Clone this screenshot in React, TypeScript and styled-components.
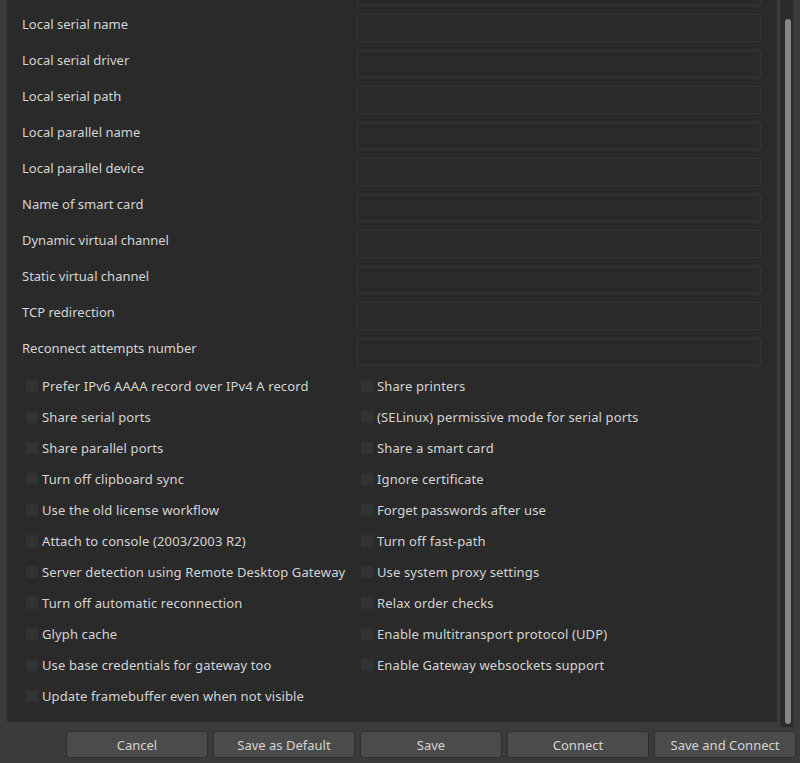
import React from "react";
import styled, { createGlobalStyle } from "styled-components";

const Global = createGlobalStyle`
  html, body { margin: 0; padding: 0; background: #3b3b3b; }
  body { font-family: "Noto Sans", "Open Sans", sans-serif; }
`;

const Window = styled.div`
  width: 800px;
  height: 763px;
  background: #3b3b3b;
  display: flex;
  flex-direction: column;
  overflow: hidden;
  font-family: "Noto Sans", "Open Sans", sans-serif;
  font-size: 13px;
  color: #d4d4d4;
`;

const Top = styled.div`
  display: flex;
  align-items: flex-start;
  height: 727px;
  padding-left: 7px;
`;

const Panel = styled.div`
  width: 770px;
  height: 722px;
  background: #2a2a2a;
  overflow: hidden;
  box-sizing: border-box;
  padding: 0 16px 0 15px;
`;

const FormGrid = styled.div`
  display: grid;
  grid-template-columns: 335px 1fr;
  grid-auto-rows: 28px;
  row-gap: 8px;
  margin-top: -22px;
`;

const Label = styled.div`
  line-height: 18px;
  padding-top: 1px;
  white-space: nowrap;
`;

const Field = styled.div`
  border: 1px solid #363636;
  border-radius: 3px;
  background: #2a2a2a;
`;

const CheckGrid = styled.div`
  display: grid;
  grid-template-columns: 335px 1fr;
  grid-auto-rows: 18px;
  row-gap: 13px;
  margin-top: 11px;
`;

const CheckItem = styled.div`
  display: flex;
  align-items: flex-end;
  line-height: 18px;
  padding-left: 4px;
  white-space: nowrap;
  letter-spacing: 0.12px;
`;

const Box = styled.span`
  width: 12px;
  height: 12px;
  background: #333333;
  border-radius: 1px;
  margin-right: 4px;
  margin-bottom: 3px;
  flex: none;
`;

const Track = styled.div`
  width: 13px;
  height: 727px;
  margin-left: 3px;
  background: #2b2b2b;
  box-sizing: border-box;
  padding: 19px 0 0 5px;
`;

const Thumb = styled.div`
  width: 6px;
  height: 705px;
  background: #868686;
  border-radius: 3px;
`;

const ButtonBar = styled.div`
  display: flex;
  gap: 5px;
  padding-left: 66px;
  margin-top: 4px;
`;

const Button = styled.div`
  width: 142px;
  height: 27px;
  box-sizing: border-box;
  background: #4b4b4b;
  border: 1px solid #2f2f2f;
  border-radius: 3px;
  display: flex;
  align-items: center;
  justify-content: center;
  color: #d4d4d4;
  font-size: 13px;
`;

const fields = [
  "",
  "Local serial name",
  "Local serial driver",
  "Local serial path",
  "Local parallel name",
  "Local parallel device",
  "Name of smart card",
  "Dynamic virtual channel",
  "Static virtual channel",
  "TCP redirection",
  "Reconnect attempts number",
];

const checks: [string, string][] = [
  ["Prefer IPv6 AAAA record over IPv4 A record", "Share printers"],
  ["Share serial ports", "(SELinux) permissive mode for serial ports"],
  ["Share parallel ports", "Share a smart card"],
  ["Turn off clipboard sync", "Ignore certificate"],
  ["Use the old license workflow", "Forget passwords after use"],
  ["Attach to console (2003/2003 R2)", "Turn off fast-path"],
  ["Server detection using Remote Desktop Gateway", "Use system proxy settings"],
  ["Turn off automatic reconnection", "Relax order checks"],
  ["Glyph cache", "Enable multitransport protocol (UDP)"],
  ["Use base credentials for gateway too", "Enable Gateway websockets support"],
  ["Update framebuffer even when not visible", ""],
];

const buttons = ["Cancel", "Save as Default", "Save", "Connect", "Save and Connect"];

export default function App() {
  return (
    <Window>
      <Global />
      <Top>
        <Panel>
          <FormGrid>
            {fields.map((f, i) => (
              <React.Fragment key={i}>
                <Label>{f}</Label>
                <Field />
              </React.Fragment>
            ))}
          </FormGrid>
          <CheckGrid>
            {checks.map(([a, b], i) => (
              <React.Fragment key={i}>
                <CheckItem>
                  <Box />
                  {a}
                </CheckItem>
                {b ? (
                  <CheckItem>
                    <Box />
                    {b}
                  </CheckItem>
                ) : (
                  <div />
                )}
              </React.Fragment>
            ))}
          </CheckGrid>
        </Panel>
        <Track>
          <Thumb />
        </Track>
      </Top>
      <ButtonBar>
        {buttons.map((b) => (
          <Button key={b}>{b}</Button>
        ))}
      </ButtonBar>
    </Window>
  );
}
